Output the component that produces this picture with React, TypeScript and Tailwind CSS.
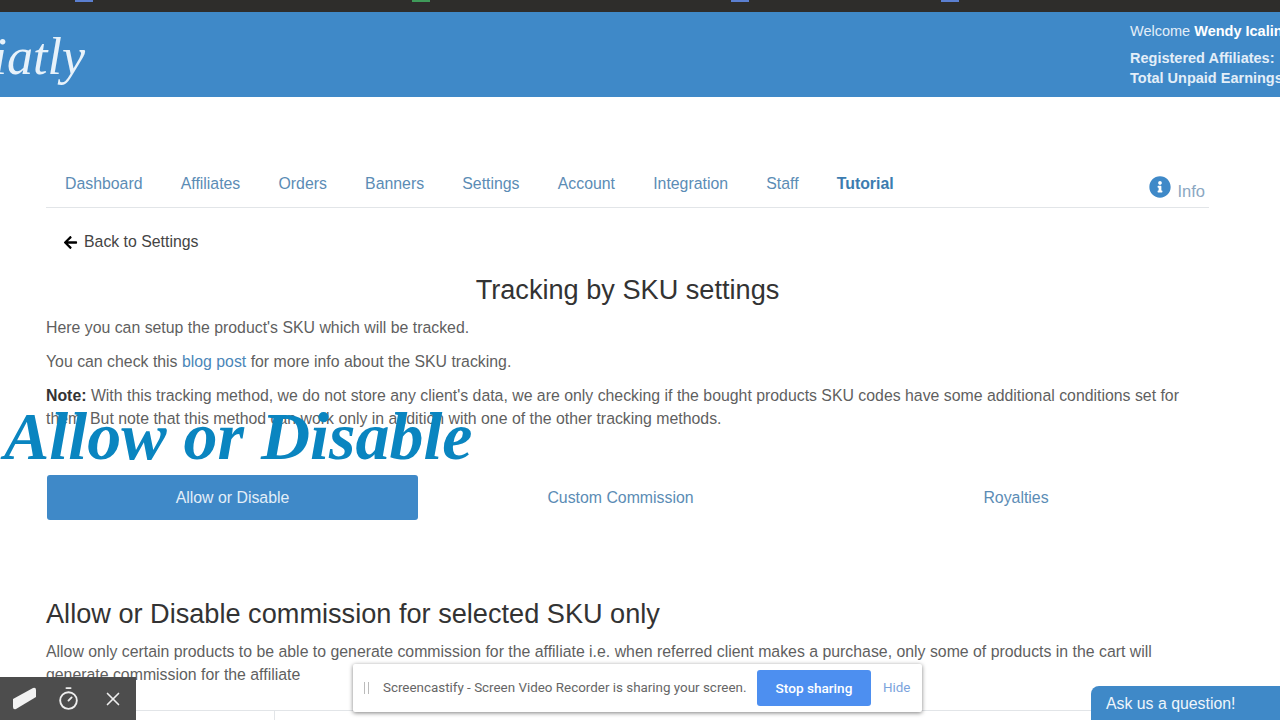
import { Timer, X } from "lucide-react";
import { FaArrowLeft, FaInfoCircle } from "react-icons/fa";

const navItems = ["Dashboard", "Affiliates", "Orders", "Banners", "Settings", "Account", "Integration", "Staff"];

export default function App() {
  return (
    <div className="relative h-[720px] w-[1280px] overflow-hidden bg-white font-['Liberation_Sans',Arial,sans-serif] text-[15.85px] text-[#5f5f5f]">
      {/* browser bookmarks strip */}
      <div className="flex h-3 items-start bg-[#2e2d2b] pl-[75px]">
        <span className="h-[2px] w-[18px] bg-[#5b7fd0]" />
        <span className="ml-[319px] h-[2px] w-[18px] bg-[#3f9a5a]" />
        <span className="ml-[301px] h-[2px] w-[18px] bg-[#5b7fd0]" />
        <span className="ml-[192px] h-[2px] w-[18px] bg-[#5b7fd0]" />
      </div>

      {/* header */}
      <header className="flex h-[85px] justify-between overflow-hidden bg-[#3f89c8] text-white">
        <div className="ml-[-97px] mt-[10px] font-['Liberation_Serif',serif] text-[52px] leading-[70px] text-[#e8f2fa] italic">Affiliatly</div>
        <div className="ml-auto w-[150px] whitespace-nowrap pt-[10px] text-[14.5px] font-bold text-[#e3eef8]">
          <p className="leading-[18px]"><span className="font-normal">Welcome</span> <span className="text-white">Wendy Icalina</span></p>
          <p className="mt-[8px] leading-5">Registered Affiliates:</p>
          <p className="leading-5">Total Unpaid Earnings:</p>
        </div>
      </header>

      <main className="px-[46px]">
        {/* nav */}
        <nav className="mt-[70px] flex h-[41px] w-[1163px] items-start border-b border-[#e2e5e8] pl-[19px] text-[#5b8cb5]">
          <ul className="flex gap-[38.2px] pt-[5px] leading-6">
            {navItems.map((item) => (
              <li key={item}>{item}</li>
            ))}
            <li className="font-bold text-[#3c7cb0]">Tutorial</li>
          </ul>
          <div className="ml-auto mr-[4px] flex items-start gap-[6px] text-[16.5px] text-[#8ba7c2]">
            <FaInfoCircle className="mt-[9px] text-[#3f89c8]" size={22} />
            <span className="mt-[12px] leading-6">Info</span>
          </div>
        </nav>

        <div className="mt-[22px] flex items-center gap-[6px] pl-[17px] leading-6 text-[#444]">
          <FaArrowLeft className="text-black" size={15} />
          <span>Back to Settings</span>
        </div>

        <h1 className="mt-[20px] w-[1163px] text-center text-[27.15px] leading-8 text-[#333]">Tracking by SKU settings</h1>

        <p className="mt-[10px] leading-6">Here you can setup the product's SKU which will be tracked.</p>
        <p className="mt-[10px] leading-6">
          You can check this <span className="text-[#4a86b8]">blog post</span> for more info about the SKU tracking.
        </p>
        <p className="mt-[10px] w-[1163px] leading-[23px]">
          <b className="text-[#333]">Note:</b> With this tracking method, we do not store any client's data, we are only checking if the bought products SKU codes have some additional conditions set for them. But note that this method can work only in addition with one of the other tracking methods.
        </p>

        {/* tabs */}
        <div className="ml-px mt-[45px] flex h-[45px] w-[1162px] items-center text-center text-[#5b8cb5]">
          <div className="flex h-[45px] w-[371px] items-center justify-center rounded-[3px] bg-[#3f89c8] text-[#e3eef8]">Allow or Disable</div>
          <div className="w-[405px]">Custom Commission</div>
          <div className="flex-1">Royalties</div>
        </div>

        <h2 className="mt-[78px] text-[27.15px] leading-8 text-[#333]">Allow or Disable commission for selected SKU only</h2>
        <p className="mt-[10px] w-[1163px] leading-[23px]">
          Allow only certain products to be able to generate commission for the affiliate i.e. when referred client makes a purchase, only some of products in the cart will generate commission for the affiliate
        </p>
        <div className="mt-[24px] flex h-6 w-[1163px] border-t border-[#e2e5e8]">
          <div className="w-[229px] border-r border-[#e2e5e8]" />
        </div>
      </main>

      {/* video caption */}
      <div className="absolute left-[4px] top-[393px] whitespace-nowrap font-['Liberation_Serif',serif] text-[68px] font-bold italic leading-[86px] text-[#0a85c0]">Allow or Disable</div>

      {/* recorder toolbar */}
      <div className="absolute bottom-0 left-0 flex h-[43px] w-[136px] items-center bg-[#4d4d4d] text-[#eee]">
        <svg className="ml-[12px]" width="24" height="23" viewBox="0 0 24 23">
          <path d="M1 12 L21 1 Q24 0 24 3 L24 10 L4 22 Q1 23 1 20 Z" fill="#f2f2f2" />
        </svg>
        <Timer className="ml-[20px]" size={25} strokeWidth={1.8} />
        <X className="ml-[21px]" size={22} strokeWidth={1.8} />
      </div>

      {/* chrome sharing bar */}
      <div className="absolute left-[353px] top-[664px] flex h-[48px] w-[569px] items-center rounded-[2px] bg-white pl-[11px] font-['Roboto',sans-serif] text-[13.4px] text-[#666] shadow-[0_1px_4px_rgba(0,0,0,0.5)]">
        <span className="h-3 w-[5px] border-x border-[#bbb]" />
        <span className="ml-[14px] whitespace-nowrap">Screencastify - Screen Video Recorder is sharing your screen.</span>
        <span className="absolute left-[404px] flex h-9 w-[114px] items-center justify-center rounded-[3px] bg-[#4d8ff0] text-[13.6px] font-medium text-white">Stop sharing</span>
        <span className="absolute left-[530px] text-[#7ba3dc]">Hide</span>
      </div>

      {/* chat */}
      <div className="absolute bottom-0 right-0 flex h-[34px] w-[189px] items-center rounded-tl-[8px] bg-[#3f89c8] pl-[15px] pt-px text-[15.85px] text-[#eef5fb]">Ask us a question!</div>
    </div>
  );
}
